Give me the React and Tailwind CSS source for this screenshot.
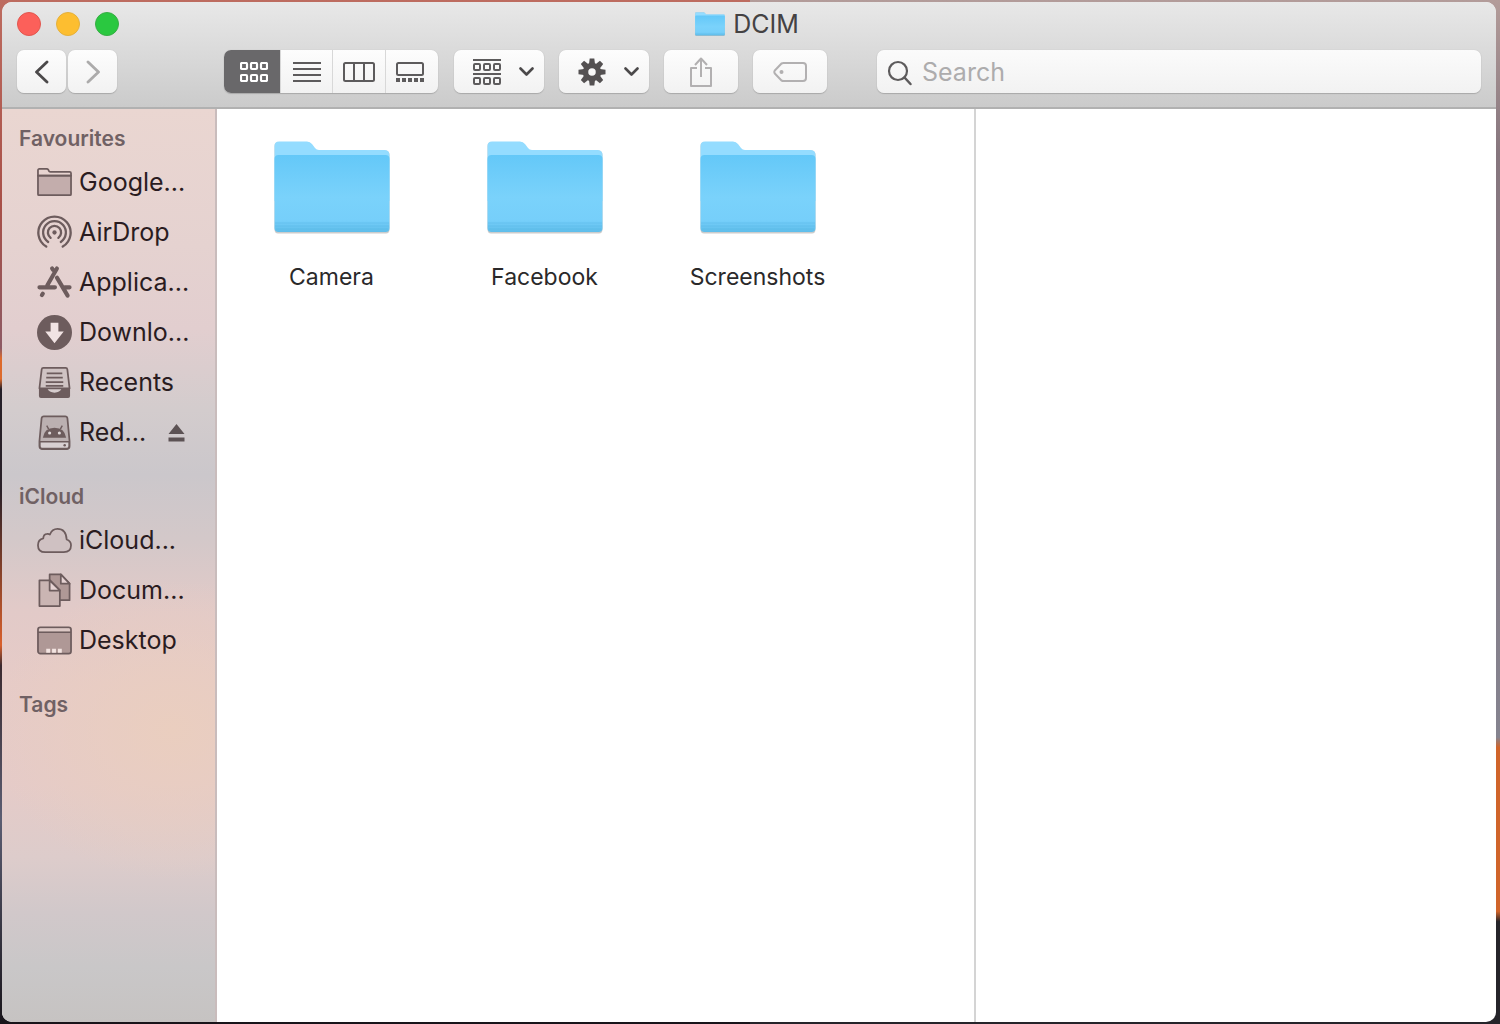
// Finder window: title bar + toolbar, sidebar, icon grid and an empty preview pane.
const ICON = "#6d5c5d";

function BlueFolder({ className }) {
  return (
    <svg viewBox="0 0 116 93" className={className} aria-hidden="true">
      <defs>
        <linearGradient id="folder-front" x1="0" y1="0" x2="0" y2="1">
          <stop offset="0" stopColor="#64c8f8" />
          <stop offset="0.55" stopColor="#7ad2fb" />
          <stop offset="0.85" stopColor="#76cffa" />
          <stop offset="1" stopColor="#5fbdea" />
        </linearGradient>
      </defs>
      <path d="M0.5 88V5Q0.5 1 5 1H33Q36 1 38 4L41 8Q42 9.500 44 9.500H112Q115.500 10 115.500 14V88Q115.500 92.500 112 92.500H4Q0.500 92.500 0.500 88Z" fill="#9a9a9a" opacity="0.5" />
      <path d="M0.5 87V5Q0.5 0.500 5 0.500H33Q36 0.500 38 3L41 7Q42.500 9 45 9H111Q115.500 9.500 115.500 14V60H0.5Z" fill="#94dcff" />
      <path d="M0.5 18Q0.5 14 4.500 14H111.500Q115.500 14 115.500 18V87Q115.500 91 111.500 91H4.500Q0.500 91 0.500 87Z" fill="url(#folder-front)" />
      <path d="M1 82H115M1 85H115M2 88H114" stroke="#4fb2e2" strokeWidth="1" opacity="0.35" />
    </svg>
  );
}

/* ---------- toolbar icons ---------- */

function ChevronIcon() {
  return (
    <svg width="15" height="10" viewBox="0 0 15 10" fill="none" stroke="#4b494a" strokeWidth="2.6" strokeLinecap="round" strokeLinejoin="round">
      <path d="M1.5 1.500L7.500 7.500L13.500 1.500" />
    </svg>
  );
}

function ArrowIcon({ dir, color }) {
  return (
    <svg width="14" height="24" viewBox="0 0 14 24" fill="none" stroke={color} strokeWidth="2.8" strokeLinecap="round" strokeLinejoin="round">
      <path d={dir === "left" ? "M12 2L1.500 12L12 22" : "M2 2L12.500 12L2 22"} />
    </svg>
  );
}

function GridIcon() {
  return (
    <svg width="28" height="20" viewBox="0 0 28 20" fill="none" stroke="#fff" strokeWidth="2.2">
      {[1, 11, 21].map((x) => (
        <g key={x}>
          <rect x={x} y="1" width="6" height="6" rx="1" />
          <rect x={x} y="13" width="6" height="6" rx="1" />
        </g>
      ))}
    </svg>
  );
}

function ListIcon() {
  return (
    <svg width="28" height="20" viewBox="0 0 28 20" stroke="#5d5b5c" strokeWidth="2">
      <path d="M0 1H28M0 7H28M0 13H28M0 19H28" />
    </svg>
  );
}

function ColumnsIcon() {
  return (
    <svg width="32" height="20" viewBox="0 0 32 20" fill="none" stroke="#5d5b5c" strokeWidth="2">
      <rect x="1" y="1" width="30" height="18" rx="1.5" />
      <path d="M11 1V19M21 1V19" />
    </svg>
  );
}

function GalleryIcon() {
  return (
    <svg width="28" height="20" viewBox="0 0 28 20" fill="none" stroke="#5d5b5c" strokeWidth="2">
      <rect x="1" y="1" width="26" height="12" rx="1.5" />
      <path d="M0 18H28" strokeWidth="4" strokeDasharray="4 2" />
    </svg>
  );
}

function ArrangeIcon() {
  return (
    <svg width="28" height="26" viewBox="0 0 28 26" fill="none" stroke="#5d5b5c" strokeWidth="2">
      <path d="M0 1H28M0 15H28" />
      {[1, 11, 21].map((x) => (
        <g key={x}>
          <rect x={x} y="5" width="6" height="6" rx="1" />
          <rect x={x} y="19" width="6" height="6" rx="1" />
        </g>
      ))}
    </svg>
  );
}

function GearIcon() {
  return (
    <svg width="28" height="28" viewBox="-14 -14 28 28">
      <circle r="6.500" fill="none" stroke="#545152" strokeWidth="5.500" />
      <g fill="#545152">
        {[0, 45, 90, 135, 180, 225, 270, 315].map((a) => (
          <path key={a} d="M-3 -8L-2.300 -13.500H2.300L3 -8Z" transform={`rotate(${a})`} />
        ))}
      </g>
    </svg>
  );
}

function ShareIcon() {
  return (
    <svg width="22" height="30" viewBox="0 0 22 30" fill="none" stroke="#b2b0b1" strokeWidth="2" strokeLinejoin="round">
      <path d="M7 11H1V29H21V11H15M11 20V2M5 8L11 1.500L17 8" />
    </svg>
  );
}

function TagIcon() {
  return (
    <svg width="34" height="20" viewBox="0 0 34 20" fill="none" stroke="#b2b0b1" strokeWidth="2" strokeLinejoin="round">
      <path d="M8.500 1.500Q9.500 1 10.500 1H30Q33 1 33 4V16Q33 19 30 19H10.500Q9.500 19 8.500 18.500L1.800 11.500Q0.800 10 1.800 8.500Z" />
      <circle cx="8.500" cy="10" r="2" fill="#b2b0b1" stroke="none" />
    </svg>
  );
}

function SearchIcon() {
  return (
    <svg width="26" height="26" viewBox="0 0 26 26" fill="none" stroke="#5d5b5c" strokeWidth="2.200" strokeLinecap="round">
      <circle cx="11" cy="11" r="9" />
      <path d="M17.500 17.500L23.500 24" strokeWidth="2.500" />
    </svg>
  );
}

/* ---------- sidebar icons ---------- */

function SideIcon({ children }) {
  return (
    <svg width="35" height="35" viewBox="0 0 36 36" fill="none" stroke={ICON} strokeWidth="1.800" strokeLinejoin="round" className="mb-[2px] shrink-0">
      {children}
    </svg>
  );
}

const icons = {
  folder: (
    <SideIcon>
      <path d="M1 11V30Q1 31 2 31H34Q35 31 35 30V11Z" fill="#c3adac" />
      <path d="M1 11V5.500Q1 4 2.500 4H10Q11 4 11.700 5L12.500 6.500Q13 7 14 7H33.500Q35 7 35 8.500V11Z" />
    </SideIcon>
  ),
  airdrop: (
    <SideIcon>
      <g strokeWidth="2.400" strokeLinecap="round">
        <path d="M9.500 32.500A16.600 16.600 0 1 1 26.500 32.500" />
        <path d="M11.500 27.700A11.700 11.700 0 1 1 24.500 27.700" />
        <path d="M14 23.500A6.800 6.800 0 1 1 22 23.500" />
      </g>
      <circle cx="18" cy="18" r="2.200" fill={ICON} stroke="none" />
    </SideIcon>
  ),
  applications: (
    <SideIcon>
      <g strokeWidth="4.200" strokeLinecap="round">
        <path d="M20.500 3.500L10.500 21M15.500 3.500L16.500 5M20.500 13L31.500 31.500M2.500 23H18.500M28.500 23H33.500M6 29.500L5 31" />
      </g>
    </SideIcon>
  ),
  downloads: (
    <SideIcon>
      <circle cx="18" cy="18" r="18" fill={ICON} stroke="none" />
      <path d="M14 8H22V17H27.500L18 29L8.500 17H14Z" fill="#f1e3e3" stroke="none" />
    </SideIcon>
  ),
  recents: (
    <SideIcon>
      <path d="M6.500 3H29.500Q31 3 31.200 4.500L33.500 24H2.500L4.800 4.500Q5 3 6.500 3Z" fill="#cfc3c3" />
      <path d="M10 8.500H26M9.500 13H26.500M9 17.500H27M9 21.500H27" strokeWidth="1.800" />
      <path d="M2 24H10.500Q12.500 28.500 18 28.500Q23.500 28.500 25.500 24H34V32Q34 34 32 34H4Q2 34 2 32Z" fill={ICON} stroke="none" />
    </SideIcon>
  ),
  phone: (
    <SideIcon>
      <path d="M7 1.500H29Q31 1.500 31.300 3.500L33.500 27V32Q33.500 35 31 35H5Q2.500 35 2.500 32V27L4.700 3.500Q5 1.500 7 1.500Z" fill="#bbb0b1" />
      <path d="M3 27.500H33V32Q33 34.500 31 34.500H5Q3 34.500 3 32Z" fill="#d8d0d2" strokeWidth="1.500" />
      <path d="M6 23.500Q7.500 13 18 13Q28.500 13 30 23.500Z" fill={ICON} stroke="none" />
      <path d="M12 14.500L10 11M24 14.500L26 11" strokeWidth="1.500" />
      <circle cx="13" cy="18.500" r="1.600" fill="#e0d8d9" stroke="none" />
      <circle cx="23" cy="18.500" r="1.600" fill="#e0d8d9" stroke="none" />
      <circle cx="28.500" cy="31" r="1.300" fill={ICON} stroke="none" />
    </SideIcon>
  ),
  cloud: (
    <SideIcon>
      <path d="M8.500 30Q1 30 1 22.800Q1 17 6.500 15.800Q6.500 11.500 10.500 11.200Q12 11 13.300 11.800Q15.500 6 21 6Q30 6 30.500 17Q35 18.500 35 23Q35 30 27.500 30Z" fill="#cfc1c2" />
    </SideIcon>
  ),
  documents: (
    <SideIcon>
      <path d="M13 1.500H24.500L33.500 11V28H13Z" fill="#af9896" />
      <path d="M24.500 1.500V11H33.500Z" fill="#e6d3d3" />
      <path d="M2.500 7.500H13.500L23.500 17.500V34H2.500Z" fill="#cab5b3" />
      <path d="M13 7.500V18H23.500Z" fill="#e6d3d3" />
    </SideIcon>
  ),
  desktop: (
    <SideIcon>
      <rect x="1" y="4.500" width="34" height="27" rx="2.500" fill="#af9896" />
      <path d="M2 7Q2 5.500 3.500 5.500H32.500Q34 5.500 34 7V9H2Z" fill="#dcc8c5" stroke="none" />
      <path d="M1 9.500H35" strokeWidth="1.500" />
      <path d="M9.500 28.500H27.500" stroke="#f3e4e1" strokeWidth="4" strokeDasharray="4 2" />
    </SideIcon>
  ),
};

const sections = [
  {
    title: "Favourites",
    items: [
      { label: "Google...", icon: "folder" },
      { label: "AirDrop", icon: "airdrop" },
      { label: "Applica...", icon: "applications" },
      { label: "Downlo...", icon: "downloads" },
      { label: "Recents", icon: "recents" },
      { label: "Red...", icon: "phone", eject: true },
    ],
  },
  {
    title: "iCloud",
    items: [
      { label: "iCloud...", icon: "cloud" },
      { label: "Docum...", icon: "documents" },
      { label: "Desktop", icon: "desktop" },
    ],
  },
  { title: "Tags", items: [] },
];

const folders = ["Camera", "Facebook", "Screenshots"];

function ToolButton({ label, className = "", children, ...rest }) {
  return (
    <button
      type="button"
      aria-label={label}
      className={`flex h-[43px] shrink-0 items-center rounded-[7px] bg-linear-to-b from-[#fdfdfd] to-[#f2f2f2] shadow-[0_1px_1px_#a9a9a9,0_0_1px_#b5b5b5] ${className}`}
      {...rest}
    >
      {children}
    </button>
  );
}

function TitleBar() {
  return (
    <div className="grid h-[43px] grid-cols-[1fr_auto_1fr] items-center">
      <div className="flex gap-[15px]">
        <button type="button" aria-label="Close" className="size-6 rounded-full border border-[#e0574f] bg-[#fc605a]" />
        <button type="button" aria-label="Minimise" className="size-6 rounded-full border border-[#e4b03c] bg-[#fdbe30]" />
        <button type="button" aria-label="Zoom" className="size-6 rounded-full border border-[#38ad45] bg-[#2ac840]" />
      </div>
      <h1 className="flex items-center gap-2 pt-[2px] pr-1 text-[25px] text-[#444243]">
        <BlueFolder className="w-[30px]" />
        DCIM
      </h1>
    </div>
  );
}

function Toolbar() {
  return (
    <div className="flex items-center pt-[5px]">
      <div className="flex gap-[2px]">
        <ToolButton label="Back" className="w-[49px] justify-center">
          <ArrowIcon dir="left" color="#4b494a" />
        </ToolButton>
        <ToolButton label="Forward" className="w-[49px] justify-center">
          <ArrowIcon dir="right" color="#acabab" />
        </ToolButton>
      </div>

      <div className="ml-[107px] grid h-[43px] w-[214px] shrink-0 grid-cols-[57px_1fr_1fr_1fr] divide-x divide-[#d8d8d8] overflow-hidden rounded-[7px] bg-linear-to-b from-[#fdfdfd] to-[#f2f2f2] shadow-[0_1px_1px_#a9a9a9,0_0_1px_#b5b5b5]">
        <button type="button" aria-label="Icons" aria-pressed="true" className="flex items-center justify-center bg-[#69686a] pl-1">
          <GridIcon />
        </button>
        <button type="button" aria-label="List" className="flex items-center justify-center">
          <ListIcon />
        </button>
        <button type="button" aria-label="Columns" className="flex items-center justify-center">
          <ColumnsIcon />
        </button>
        <button type="button" aria-label="Gallery" className="flex items-center justify-center pr-1">
          <GalleryIcon />
        </button>
      </div>

      <div className="ml-4 flex gap-[15px]">
        <ToolButton label="Arrange" aria-haspopup="menu" className="w-[90px] justify-between pr-[10px] pl-[19px]">
          <ArrangeIcon />
          <ChevronIcon />
        </ToolButton>
        <ToolButton label="Action" aria-haspopup="menu" className="w-[90px] justify-between pr-[10px] pl-[19px]">
          <GearIcon />
          <ChevronIcon />
        </ToolButton>
        <ToolButton label="Share" className="w-[74px] justify-center">
          <ShareIcon />
        </ToolButton>
        <ToolButton label="Tags" className="w-[74px] justify-center">
          <TagIcon />
        </ToolButton>
      </div>

      <label className="ml-[50px] flex h-[43px] min-w-0 flex-1 items-center gap-[9px] rounded-[7px] bg-linear-to-b from-[#fbfbfb] to-[#f2f2f2] px-[10px] pt-[2px] shadow-[0_1px_1px_#a9a9a9,0_0_1px_#b5b5b5]">
        <SearchIcon />
        <input
          type="search"
          aria-label="Search"
          placeholder="Search"
          className="min-w-0 flex-1 bg-transparent text-[25px] outline-none placeholder:text-[#adacad]"
        />
      </label>
    </div>
  );
}

function Sidebar() {
  return (
    <nav className="flex w-[215px] shrink-0 flex-col gap-5 border-r-2 border-[#c9bcbc] bg-[radial-gradient(ellipse_180px_150px_at_80%_68%,#eacebf_0%,#eacebf00_100%),linear-gradient(180deg,#ead6d1_0%,#e5d2d0_15%,#e2cecf_24%,#d3cccd_33%,#cbc7cb_40%,#d3c8c9_47%,#e2cac8_55%,#e6cbc7_63%,#e5cbc8_74%,#ddcccb_82%,#d1c8ca_88%,#c9c7c8_94%,#c6c3c2_100%)] pt-[11px]">
      {sections.map((s) => (
        <section key={s.title}>
          <h2 className="flex h-[38px] items-center pl-[17px] text-[21px] font-semibold text-[#706164]">{s.title}</h2>
          <ul>
            {s.items.map((it) => (
              <li key={it.label} className="flex h-[50px] items-center pr-[30px] pl-[35px]">
                <a href="#" className="flex flex-1 items-center gap-[7px] text-[25px] whitespace-nowrap text-[#2a1c1f]">
                  {icons[it.icon]}
                  {it.label}
                </a>
                {it.eject && (
                  <button type="button" aria-label="Eject">
                    <svg width="17" height="18" viewBox="0 0 17 18" fill="#5c5254">
                      <path d="M8.500 0L16.500 10H0.500ZM0.500 13.500H16.500V17.500H0.500Z" />
                    </svg>
                  </button>
                )}
              </li>
            ))}
          </ul>
        </section>
      ))}
    </nav>
  );
}

export default function App() {
  return (
    <div className="flex min-h-screen bg-[linear-gradient(180deg,#bd6c60_0%,#a85048_20%,#8d5a64_34%,#dd6a2c_35%,#dd6a2c_37%,#241f28_38%,#2a2028_48%,#d9602c_63%,#3a2a30_65%,#5b5d72_80%,#18141a_100%),linear-gradient(180deg,#b39c9a_0%,#86767e_15%,#85838f_72%,#d0642a_73%,#d0642a_89%,#25242a_90%,#25242a_100%)] bg-[length:50%_100%,100%_100%] bg-no-repeat py-[2px] pr-1 pl-[2px] font-['Inter','Liberation_Sans',sans-serif]">
      <div className="flex min-w-0 flex-1 flex-col overflow-hidden rounded-[10px] bg-white">
        <header className="h-[107px] shrink-0 border-b-2 border-[#b1b1b1] bg-linear-to-b from-[#e8e8e8] to-[#cbcbcb] px-[15px]">
          <TitleBar />
          <Toolbar />
        </header>
        <div className="flex flex-1">
          <Sidebar />
          <main className="min-w-0 flex-1">
            <ul className="flex flex-wrap pt-8 pl-[8px]">
              {folders.map((name) => (
                <li key={name} className="flex w-[213px] flex-col items-center gap-[27px]">
                  <BlueFolder className="w-[116px]" />
                  <span className="text-[23px] leading-8 text-[#2a292a]">{name}</span>
                </li>
              ))}
            </ul>
          </main>
          <aside aria-label="Preview" className="w-[522px] shrink-0 border-l-2 border-[#d4d4d4]" />
        </div>
      </div>
    </div>
  );
}
